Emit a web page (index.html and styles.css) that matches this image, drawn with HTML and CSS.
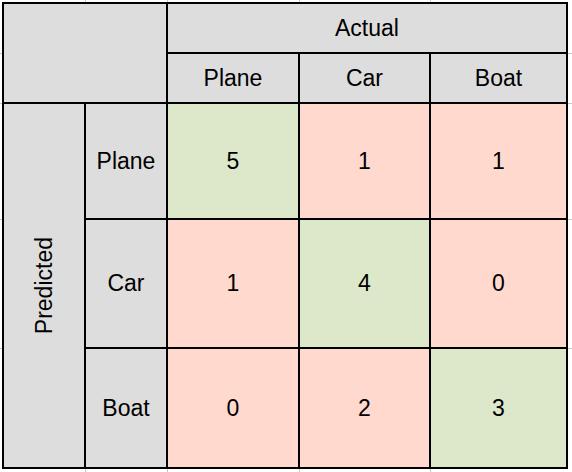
FILE: index.html
```html
<!DOCTYPE html>
<html>
<head>
<meta charset="utf-8">
<link rel="stylesheet" href="styles.css">
</head>
<body>
<div class="sheet">
  <div class="matrix">
    <div class="cell head corner"></div>
    <div class="cell head actual">Actual</div>
    <div class="cell head">Plane</div>
    <div class="cell head">Car</div>
    <div class="cell head">Boat</div>
    <div class="cell head predicted"><span class="vtext">Predicted</span></div>
    <div class="cell head">Plane</div>
    <div class="cell good">5</div>
    <div class="cell bad">1</div>
    <div class="cell bad">1</div>
    <div class="cell head">Car</div>
    <div class="cell bad">1</div>
    <div class="cell good">4</div>
    <div class="cell bad">0</div>
    <div class="cell head">Boat</div>
    <div class="cell bad">0</div>
    <div class="cell bad">2</div>
    <div class="cell good">3</div>
  </div>
</div>
</body>
</html>
```
FILE: styles.css
```css
html, body {
  margin: 0;
  padding: 0;
}
body {
  width: 572px;
  height: 472px;
  overflow: hidden;
  background-color: #ffffff;
  background-image:
    linear-gradient(#c8c8c8, #c8c8c8),
    linear-gradient(#c8c8c8, #c8c8c8),
    linear-gradient(#c8c8c8, #c8c8c8),
    linear-gradient(#c8c8c8, #c8c8c8),
    linear-gradient(#c8c8c8, #c8c8c8),
    linear-gradient(#c8c8c8, #c8c8c8),
    linear-gradient(#c8c8c8, #c8c8c8),
    linear-gradient(#c8c8c8, #c8c8c8);
  background-repeat: no-repeat;
  background-size:
    1px 100%, 1px 100%, 1px 100%, 1px 100%,
    100% 1px, 100% 1px, 100% 1px, 100% 1px;
  background-position:
    85px 0, 167px 0, 299px 0, 430px 0,
    0 53px, 0 103px, 0 219px, 0 348px;
  font-family: "Liberation Sans", Arial, sans-serif;
}
.sheet {
  padding: 2px 0 0 2px;
}
.matrix {
  display: grid;
  width: max-content;
  grid-template-columns: 80px 80px 130px 129px 135px;
  grid-template-rows: 48px 48px 114px 127px 118px;
  gap: 2px;
  padding: 2px;
  background: #000000;
}
.cell {
  display: flex;
  align-items: center;
  justify-content: center;
  font-size: 23px;
  color: #000000;
}
.head {
  background: #dddddd;
}
.good {
  background: #dde8cb;
}
.bad {
  background: #ffd8ce;
}
.corner {
  grid-column: 1 / 3;
  grid-row: 1 / 3;
}
.actual {
  grid-column: 3 / 6;
}
.predicted {
  grid-row: 3 / 6;
}
.vtext {
  writing-mode: vertical-rl;
  transform: rotate(180deg);
}
```
